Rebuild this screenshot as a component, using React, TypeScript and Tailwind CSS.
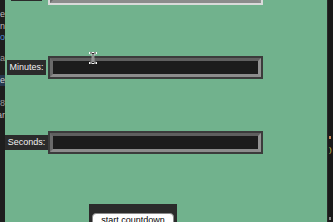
import React from "react";

function Field({ focused }: { focused?: boolean }) {
  return (
    <div
      className={`w-[215px] h-[23px] border-2 ${
        focused ? "border-[#dadada]" : "border-[#3b3b3b]"
      }`}
    >
      <div className="w-full h-full border-[3px] border-t-[#5f5f5f] border-l-[#6a6a6a] border-b-[#8c8c8c] border-r-[#929292] bg-[#1c1c1c]" />
    </div>
  );
}

function Row({ label, focused, className }: { label: string; focused?: boolean; className?: string }) {
  return (
    <div className={`flex items-center ${className ?? ""}`}>
      <div className="w-[43px] flex justify-center">
        <span className="h-[15px] px-[2.5px] bg-[#2b2b2b] text-[#f2f2f2] text-[9px] leading-[15px] whitespace-nowrap">
          {label}
        </span>
      </div>
      <Field focused={focused} />
    </div>
  );
}

function Frag({ text, top, color, bg }: { text: string; top: number; color: string; bg?: string }) {
  return (
    <div
      className="absolute left-0 w-[5px] h-[11px] overflow-hidden flex justify-end"
      style={{ top, background: bg }}
    >
      <span className="shrink-0 text-[9px] leading-[11px] whitespace-nowrap" style={{ color }}>
        {text}
      </span>
    </div>
  );
}

export default function App() {
  return (
    <div
      className="w-[333px] h-[222px] flex overflow-hidden bg-[#71b28d]"
      style={{ fontFamily: '"Liberation Sans", Arial, sans-serif' }}
    >
      <div className="relative w-[5px] h-full bg-[#1e1e1e] shrink-0">
        <Frag text="code" top={9} color="#bdbdbd" />
        <Frag text="on" top={21} color="#bdbdbd" />
        <Frag text="undo" top={32} color="#4e8fd4" />
        <Frag text="· a" top={53} color="#9a9a9a" />
        <Frag text="de" top={75} color="#cfcfcf" bg="#26384e" />
        <Frag text="8" top={98} color="#9a9a9a" />
        <Frag text="ar" top={110} color="#bdbdbd" />
      </div>
      <div className="relative flex-1 h-full">
        <div className="flex flex-col mt-[-18px]">
          <Row label="Hours:" focused />
          <Row label="Minutes:" className="mt-[51px]" />
          <Row label="Seconds:" className="mt-[52px]" />
          <div className="mt-[50px] ml-[84px] w-[88px] h-[24px] bg-[#2b2b2b] pt-[2px] px-[3px]">
            <button className="w-[82px] h-[15px] rounded-[4px] bg-white border border-[#8a8a8a] text-[9px] leading-[13px] text-black whitespace-nowrap">
              start countdown
            </button>
          </div>
        </div>
        <svg
          className="absolute left-[84px] top-[52px]"
          width="8"
          height="12"
          viewBox="0 0 8 12"
        >
          <path
            d="M1 1 H3 L4 2 L5 1 H7 M4 2 V10 M1 11 H3 L4 10 L5 11 H7"
            stroke="#ffffff"
            strokeWidth="2.4"
            fill="none"
            strokeLinecap="round"
          />
          <path
            d="M1 1 H3 L4 2 L5 1 H7 M4 2 V10 M1 11 H3 L4 10 L5 11 H7"
            stroke="#222222"
            strokeWidth="1"
            fill="none"
          />
        </svg>
      </div>
      <div className="relative w-[6px] h-full bg-[#1a1a1a] shrink-0 border-l border-[#2a2a2a]">
        <div className="absolute left-[1px] top-[136px] w-[2px] h-[3px] bg-[#c98a5a]" />
        <div className="absolute left-[1px] top-[146px] text-[8px] leading-[8px] text-[#d8c25a]">)</div>
        <div className="absolute left-[1px] top-[217px] w-[2px] h-[3px] bg-[#888]" />
      </div>
    </div>
  );
}
